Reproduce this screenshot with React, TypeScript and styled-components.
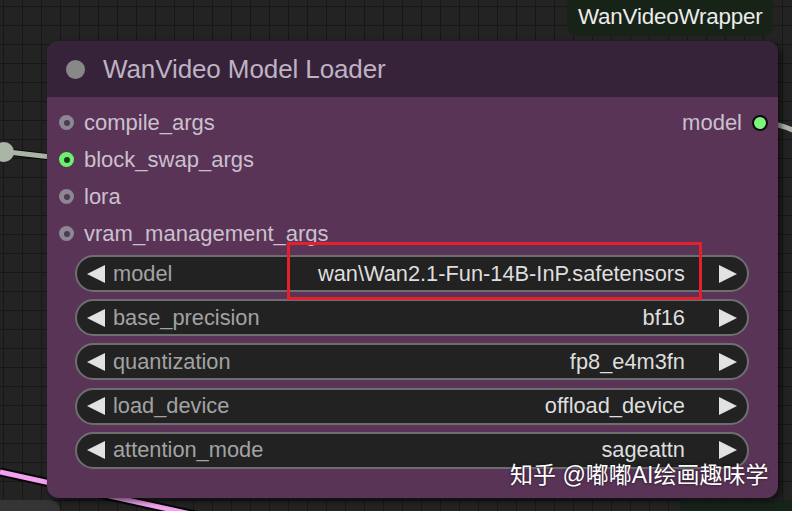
import styled, { createGlobalStyle } from 'styled-components';

type Input = {
  name: string;
  linked?: boolean;
}

type Widget = {
  label: string;
  value: string;
}

const inputs: Input[] = [
  { name: 'compile_args' },
  { name: 'block_swap_args', linked: true },
  { name: 'lora' },
  { name: 'vram_management_args' },
];

const widgets: Widget[] = [
  { label: 'model', value: 'wan\\Wan2.1-Fun-14B-InP.safetensors' },
  { label: 'base_precision', value: 'bf16' },
  { label: 'quantization', value: 'fp8_e4m3fn' },
  { label: 'load_device', value: 'offload_device' },
  { label: 'attention_mode', value: 'sageattn' },
];

const GlobalStyle = createGlobalStyle`
  html, body {
    margin: 0;
    padding: 0;
    background: #222;
  }
  body {
    font-family: "Liberation Sans", Arial, sans-serif;
  }
`;

const Canvas = styled.div`
  position: relative;
  width: 792px;
  height: 511px;
  overflow: hidden;
  background-color: #232323;
  background-image:
    linear-gradient(#171717 1px, transparent 1px),
    linear-gradient(90deg, #171717 1px, transparent 1px);
  background-size: 19px 19px;
  background-position: 3px 6px;
`;

const Wires = styled.svg`
  position: absolute;
  inset: 0;
  pointer-events: none;
`;

const GroupBadge = styled.div`
  position: absolute;
  left: 567px;
  top: -10px;
  width: 206px;
  height: 46px;
  box-sizing: border-box;
  padding: 14px 0 0 11px;
  border-radius: 10px;
  background: #172317;
  color: #ececec;
  font-size: 22.4px;
  line-height: 26px;
  letter-spacing: -0.2px;
`;

const OtherNode = styled.div<{ $x: number; $w: number; $bg: string }>`
  position: absolute;
  left: ${p => p.$x}px;
  top: 500px;
  width: ${p => p.$w}px;
  height: 40px;
  border-radius: 0 10px 0 0;
  background: ${p => p.$bg};
`;

const Node = styled.div`
  position: absolute;
  left: 47px;
  top: 41px;
  width: 731px;
  height: 457px;
  border-radius: 12px;
  background: #593457;
  box-shadow: 3px 3px 6px rgba(0, 0, 0, 0.6);
`;

const TitleBar = styled.div`
  height: 56px;
  display: flex;
  align-items: center;
  gap: 18px;
  padding-left: 19px;
  border-radius: 12px 12px 0 0;
  background: #36233a;
`;

const TitleDot = styled.span`
  width: 19px;
  height: 19px;
  border-radius: 50%;
  background: #888;
`;

const Title = styled.span`
  color: #bfb2c3;
  font-size: 26px;
  letter-spacing: -0.1px;
`;

const Body = styled.div`
  padding: 7px 0 0;
`;

const SlotRow = styled.div`
  height: 37px;
  display: flex;
  align-items: center;
  justify-content: space-between;
  padding: 0 10px 0 12px;
`;

const Slot = styled.div`
  display: flex;
  align-items: center;
  gap: 10px;
  color: #cbc0ce;
  font-size: 22px;
`;

const InDot = styled.span<{ $linked?: boolean }>`
  width: 15px;
  height: 15px;
  border-radius: 50%;
  background: ${p => (p.$linked ? '#6ef06e' : '#8d8794')};
  display: flex;
  align-items: center;
  justify-content: center;
  &::after {
    content: '';
    width: 6px;
    height: 6px;
    border-radius: 50%;
    background: ${p => (p.$linked ? '#1e3a1e' : '#4f3b53')};
  }
`;

const OutDot = styled.span`
  width: 12px;
  height: 12px;
  border-radius: 50%;
  border: 2px solid #0c0c0c;
  background: #7ef57e;
`;

const WidgetList = styled.div`
  display: flex;
  flex-direction: column;
  gap: 7.2px;
  padding: 3px 29px 0 28px;
`;

const WidgetRow = styled.div`
  height: 37px;
  box-sizing: border-box;
  display: flex;
  align-items: center;
  padding: 0 10px 0 10px;
  border: 2px solid #6e6e6e;
  border-radius: 19px;
  background: #222;
  font-size: 21.8px;
`;

const Arrow = styled.span<{ $right?: boolean }>`
  width: 0;
  height: 0;
  border-top: 9px solid transparent;
  border-bottom: 9px solid transparent;
  ${p => (p.$right ? 'border-left: 18px solid #e2e2e2;' : 'border-right: 18px solid #e2e2e2;')}
`;

const WidgetLabel = styled.span`
  flex: 1;
  margin-left: 8px;
  color: #a3a3a3;
`;

const WidgetValue = styled.span`
  margin-right: 34px;
  color: #dedede;
`;

const Highlight = styled.div`
  position: absolute;
  left: 240px;
  top: 201px;
  width: 415px;
  height: 58px;
  box-sizing: border-box;
  border: 3px solid #e3202c;
  pointer-events: none;
`;

const Watermark = styled.div`
  position: absolute;
  left: 510px;
  top: 461px;
  color: #fff;
  font-family: "Liberation Sans", "Noto Sans CJK SC", sans-serif;
  font-size: 23px;
  line-height: 28px;
  text-shadow: 0 0 3px rgba(0, 0, 0, 0.7);
  white-space: nowrap;
`;

const App = () => {
  return (
    <Canvas>
      <GlobalStyle />
      <Wires width="792" height="511">
        <path d="M0 472 L200 516" stroke="#050505" strokeWidth="9" fill="none" />
        <path d="M0 472 L200 516" stroke="#f2a2f0" strokeWidth="5" fill="none" />
        <path d="M8 152 L60 158" stroke="#0a0a0a" strokeWidth="7" fill="none" />
        <path d="M8 152 L60 158" stroke="#a9b6a5" strokeWidth="5" fill="none" />
        <circle cx="4" cy="152" r="10" fill="#a9b6a5" />
        <path d="M765 123 Q780 124 795 131" stroke="#a9b6a5" strokeWidth="5" fill="none" />
      </Wires>
      <GroupBadge>WanVideoWrapper</GroupBadge>
      <OtherNode $x={-10} $w={70} $bg="#353535" />
      <OtherNode $x={680} $w={120} $bg="#16231a" />
      <Node>
        <TitleBar>
          <TitleDot />
          <Title>WanVideo Model Loader</Title>
        </TitleBar>
        <Body>
          {inputs.map((input, i) => (
            <SlotRow key={input.name}>
              <Slot>
                <InDot $linked={input.linked} />
                {input.name}
              </Slot>
              {i === 0 && (
                <Slot>
                  model
                  <OutDot />
                </Slot>
              )}
            </SlotRow>
          ))}
          <WidgetList>
            {widgets.map(w => (
              <WidgetRow key={w.label}>
                <Arrow />
                <WidgetLabel>{w.label}</WidgetLabel>
                <WidgetValue>{w.value}</WidgetValue>
                <Arrow $right />
              </WidgetRow>
            ))}
          </WidgetList>
        </Body>
        <Highlight />
      </Node>
      <Watermark>知乎 @嘟嘟AI绘画趣味学</Watermark>
    </Canvas>
  )
}

export default App
